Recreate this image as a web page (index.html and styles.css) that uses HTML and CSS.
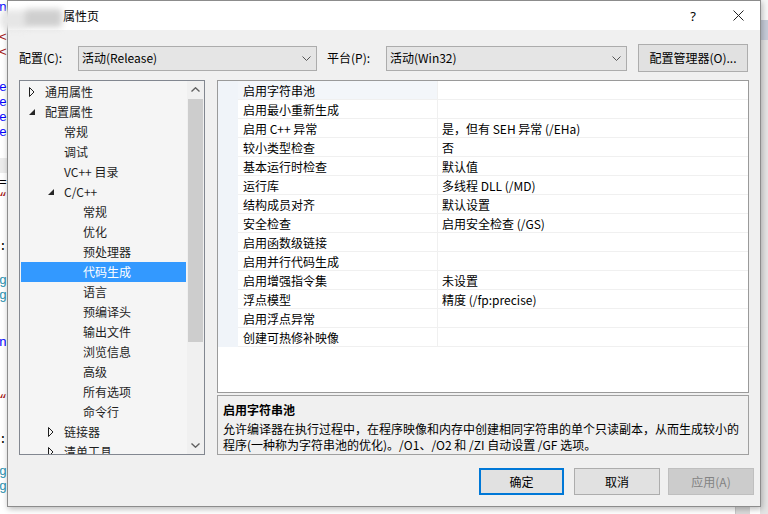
FILE: index.html
```html
<!DOCTYPE html>
<html lang="zh-CN">
<head>
<meta charset="utf-8">
<title>属性页</title>
<link rel="stylesheet" href="styles.css">
</head>
<body>
<div class="desktop">
  <!-- code editor behind the dialog -->
  <div class="editor">
    <div class="ln kw">n</div>
    <div class="ln"></div>
    <div class="ln tag">&lt;</div>
    <div class="ln tag">&lt;</div>
    <div class="gap g20"></div>
    <div class="ln kw">e</div>
    <div class="ln kw">e</div>
    <div class="ln kw">e</div>
    <div class="ln kw">e</div>
    <div class="gap g18"></div>
    <div class="band"></div>
    <div class="gap g2"></div>
    <div class="ln">=</div>
    <div class="ln str">&#8220;</div>
    <div class="gap g34"></div>
    <div class="ln">:</div>
    <div class="gap g19"></div>
    <div class="ln type">g</div>
    <div class="ln type">g</div>
    <div class="gap g32"></div>
    <div class="ln kw">n</div>
    <div class="gap g42"></div>
    <div class="ln str">&#8220;</div>
    <div class="gap g25"></div>
    <div class="ln">:</div>
    <div class="gap g17"></div>
    <div class="ln type">g</div>
    <div class="ln type">g</div>
    <div class="statusrow"><span class="scrollbox"></span></div>
  </div>
  <div class="rail">
    <div class="rail-top"></div>
    <div class="rail-tab"></div>
  </div>

  <div class="smudge"><span class="smudge-a"></span><span class="smudge-b"></span></div>

  <section class="dialog">
    <header class="titlebar">
      <span class="title">属性页</span>
      <span class="help">?</span>
      <svg class="close" viewBox="0 0 11 11" width="11" height="11"><path d="M0.5 0.5 L10.5 10.5 M10.5 0.5 L0.5 10.5" stroke="#222" stroke-width="1" fill="none"/></svg>
    </header>

    <div class="config-row">
      <span class="lbl">配置(C):</span>
      <div class="combo combo-cfg">
        <span class="combo-text">活动(Release)</span>
        <svg class="chev" viewBox="0 0 9 5" width="9" height="5"><path d="M0.5 0.5 L4.5 4.5 L8.5 0.5" stroke="#555" stroke-width="1" fill="none"/></svg>
      </div>
      <span class="lbl lbl-plat">平台(P):</span>
      <div class="combo combo-plat">
        <span class="combo-text">活动(Win32)</span>
        <svg class="chev" viewBox="0 0 9 5" width="9" height="5"><path d="M0.5 0.5 L4.5 4.5 L8.5 0.5" stroke="#555" stroke-width="1" fill="none"/></svg>
      </div>
      <button class="btn btn-mgr">配置管理器(O)...</button>
    </div>

    <div class="main">
      <div class="tree">
        <ul class="nodes">
          <li class="node lv0"><span class="tog"><svg viewBox="0 0 6 10" width="6" height="10"><path d="M0.5 0.5 L5 5 L0.5 9.5 Z" stroke="#1e1e1e" stroke-width="1" fill="none"/></svg></span>通用属性</li>
          <li class="node lv0"><span class="tog"><svg viewBox="0 0 6 6" width="6" height="6"><path d="M6 0 L6 6 L0 6 Z" fill="#262626"/></svg></span>配置属性</li>
          <li class="node lv1"><span class="tog"></span>常规</li>
          <li class="node lv1"><span class="tog"></span>调试</li>
          <li class="node lv1"><span class="tog"></span>VC++ 目录</li>
          <li class="node lv1"><span class="tog"><svg viewBox="0 0 6 6" width="6" height="6"><path d="M6 0 L6 6 L0 6 Z" fill="#262626"/></svg></span>C/C++</li>
          <li class="node lv2"><span class="tog"></span>常规</li>
          <li class="node lv2"><span class="tog"></span>优化</li>
          <li class="node lv2"><span class="tog"></span>预处理器</li>
          <li class="node lv2 selected"><span class="tog"></span>代码生成</li>
          <li class="node lv2"><span class="tog"></span>语言</li>
          <li class="node lv2"><span class="tog"></span>预编译头</li>
          <li class="node lv2"><span class="tog"></span>输出文件</li>
          <li class="node lv2"><span class="tog"></span>浏览信息</li>
          <li class="node lv2"><span class="tog"></span>高级</li>
          <li class="node lv2"><span class="tog"></span>所有选项</li>
          <li class="node lv2"><span class="tog"></span>命令行</li>
          <li class="node lv1"><span class="tog"><svg viewBox="0 0 6 10" width="6" height="10"><path d="M0.5 0.5 L5 5 L0.5 9.5 Z" stroke="#1e1e1e" stroke-width="1" fill="none"/></svg></span>链接器</li>
          <li class="node lv1"><span class="tog"><svg viewBox="0 0 6 10" width="6" height="10"><path d="M0.5 0.5 L5 5 L0.5 9.5 Z" stroke="#1e1e1e" stroke-width="1" fill="none"/></svg></span>清单工具</li>
        </ul>
        <div class="vscroll">
          <div class="vs-btn"><svg viewBox="0 0 9 5" width="9" height="5"><path d="M0.5 4.5 L4.5 0.8 L8.5 4.5" stroke="#606060" stroke-width="1.4" fill="none"/></svg></div>
          <div class="vs-thumb"></div>
          <div class="vs-track"></div>
          <div class="vs-btn"><svg viewBox="0 0 9 5" width="9" height="5"><path d="M0.5 0.5 L4.5 4.2 L8.5 0.5" stroke="#606060" stroke-width="1.4" fill="none"/></svg></div>
        </div>
      </div>

      <div class="right">
        <div class="props">
          <div class="prow current"><span class="strip"></span><span class="pname">启用字符串池</span><span class="pval"></span></div>
          <div class="prow"><span class="strip"></span><span class="pname">启用最小重新生成</span><span class="pval"></span></div>
          <div class="prow"><span class="strip"></span><span class="pname">启用 C++ 异常</span><span class="pval">是，但有 SEH 异常 (/EHa)</span></div>
          <div class="prow"><span class="strip"></span><span class="pname">较小类型检查</span><span class="pval">否</span></div>
          <div class="prow"><span class="strip"></span><span class="pname">基本运行时检查</span><span class="pval">默认值</span></div>
          <div class="prow"><span class="strip"></span><span class="pname">运行库</span><span class="pval">多线程 DLL (/MD)</span></div>
          <div class="prow"><span class="strip"></span><span class="pname">结构成员对齐</span><span class="pval">默认设置</span></div>
          <div class="prow"><span class="strip"></span><span class="pname">安全检查</span><span class="pval">启用安全检查 (/GS)</span></div>
          <div class="prow"><span class="strip"></span><span class="pname">启用函数级链接</span><span class="pval"></span></div>
          <div class="prow"><span class="strip"></span><span class="pname">启用并行代码生成</span><span class="pval"></span></div>
          <div class="prow"><span class="strip"></span><span class="pname">启用增强指令集</span><span class="pval">未设置</span></div>
          <div class="prow"><span class="strip"></span><span class="pname">浮点模型</span><span class="pval">精度 (/fp:precise)</span></div>
          <div class="prow"><span class="strip"></span><span class="pname">启用浮点异常</span><span class="pval"></span></div>
          <div class="prow"><span class="strip"></span><span class="pname">创建可热修补映像</span><span class="pval"></span></div>
        </div>
        <div class="desc">
          <div class="desc-title">启用字符串池</div>
          <div class="desc-text">允许编译器在执行过程中，在程序映像和内存中创建相同字符串的单个只读副本，从而生成较小的<br>程序(一种称为字符串池的优化)。/O1、/O2 和 /ZI 自动设置 /GF 选项。</div>
        </div>
      </div>
    </div>

    <div class="actions">
      <button class="btn btn-ok">确定</button>
      <button class="btn btn-cancel">取消</button>
      <button class="btn btn-apply" disabled>应用(A)</button>
    </div>
  </section>
</div>
</body>
</html>
```

FILE: styles.css
```css
* {
  box-sizing: border-box;
}

html,
body {
  margin: 0;
  padding: 0;
}

body {
  width: 768px;
  height: 514px;
  overflow: hidden;
  background: #fff;
  font-family: "Noto Sans CJK SC", "Noto Sans", sans-serif;
  font-size: 12px;
  color: #000;
}

/* ---------- desktop behind the dialog ---------- */
.desktop {
  position: relative;
  width: 768px;
  height: 514px;
  display: flex;
}

.editor {
  flex: 1;
  display: flex;
  flex-direction: column;
  font-family: "Liberation Mono", monospace;
  font-size: 13px;
  background: #fff;
}

.ln {
  height: 15px;
  line-height: 15px;
  margin-left: -1px;
  color: #000;
}

.kw { color: #0000ff; }
.tag { color: #a31515; }
.str { color: #a31515; }
.type { color: #2b91af; }

.gap { flex: none; }
.g2 { height: 2px; }
.g17 { height: 17px; }
.g18 { height: 18px; }
.g19 { height: 19px; }
.g20 { height: 20px; }
.g25 { height: 25px; }
.g32 { height: 32px; }
.g34 { height: 34px; }
.g42 { height: 42px; }

.band {
  height: 15px;
  background: #ececec;
}

.statusrow {
  margin-top: auto;
  height: 7px;
  display: flex;
  justify-content: flex-end;
  padding-right: 10px;
}

.scrollbox {
  width: 15px;
  height: 7px;
  background: #dadada;
  border-left: 1px solid #c8c8c8;
}

.rail {
  width: 8px;
  background: #e4e4e4;
  display: flex;
  flex-direction: column;
}

.rail-top {
  height: 20px;
  background: #f7f7f7;
}

.rail-tab {
  height: 20px;
  background: #c6cbd8;
}

/* blurred app icon in the caption */
.smudge {
  position: absolute;
  left: 0;
  top: 4px;
  width: 66px;
  height: 30px;
  z-index: 2;
  filter: blur(3px);
}

.smudge-a {
  position: absolute;
  left: 0;
  top: 6px;
  width: 30px;
  height: 20px;
  background: #e6e6e6;
  border-radius: 8px;
}

.smudge-b {
  position: absolute;
  left: 25px;
  top: 5px;
  width: 37px;
  height: 18px;
  background: #cfcfcf;
  border-radius: 3px;
}

/* ---------- dialog window ---------- */
.dialog {
  position: absolute;
  left: 7px;
  top: 0;
  width: 754px;
  height: 507px;
  border: 1px solid #8c8c8c;
  background: #f0f0f0;
  box-shadow: 1px 2px 6px rgba(0, 0, 0, 0.28);
  display: flex;
  flex-direction: column;
}

.titlebar {
  flex: none;
  height: 29px;
  background: #fff;
  display: flex;
  align-items: center;
  padding: 0 16px 0 55px;
}

.title {
  font-size: 12px;
  line-height: 16px;
}

.help {
  margin-left: auto;
  margin-right: 37px;
  font-family: "Noto Sans", sans-serif;
  font-size: 13px;
  line-height: 16px;
}

.close {
  display: block;
}

/* configuration selector row */
.config-row {
  flex: none;
  margin-top: 14px;
  height: 28px;
  padding-left: 11px;
  display: flex;
  align-items: center;
}

.lbl {
  width: 59px;
  flex: none;
  line-height: 16px;
}

.lbl-plat {
  margin-left: 10px;
}

.combo {
  flex: none;
  height: 25px;
  background: #e5e5e5;
  border: 1px solid #acacac;
  display: flex;
  align-items: center;
  padding: 0 4px 0 3px;
}

.combo-cfg { width: 239px; }
.combo-plat { width: 241px; }

.combo-text {
  line-height: 16px;
}

.chev {
  margin-left: auto;
  margin-right: 1px;
  display: block;
}

.btn {
  font-family: "Noto Sans CJK SC", "Noto Sans", sans-serif;
  font-size: 12px;
  color: #000;
  background: #e1e1e1;
  border: 1px solid #adadad;
  padding: 0;
  margin: 0;
  line-height: 16px;
}

.btn-mgr {
  margin-left: 11px;
  width: 110px;
  height: 28px;
}

/* tree + property panes */
.main {
  flex: none;
  margin-top: 8px;
  height: 375px;
  padding-left: 11px;
  display: flex;
  gap: 12px;
}

.tree {
  width: 186px;
  height: 375px;
  border: 1px solid #828790;
  background: #f5f5f5;
  display: flex;
}

.nodes {
  list-style: none;
  margin: 0;
  padding: 1px 1px 0 1px;
  width: 167px;
  overflow: hidden;
  color: #1e1e1e;
}

.node {
  height: 20px;
  line-height: 20px;
  display: flex;
  align-items: center;
  white-space: nowrap;
}

.lv0 { padding-left: 8px; }
.lv1 { padding-left: 27px; }
.lv2 { padding-left: 46px; }

.tog {
  width: 16px;
  flex: none;
  display: flex;
  align-items: center;
}

.tog svg {
  display: block;
}

.node.selected {
  background: #3399ff;
  color: #fff;
}

.vscroll {
  width: 17px;
  display: flex;
  flex-direction: column;
  background: #f0f0f0;
}

.vs-btn {
  height: 17px;
  display: flex;
  align-items: center;
  justify-content: center;
}

.vs-btn svg {
  display: block;
}

.vs-thumb {
  height: 243px;
  margin: 1px 1px 0 1px;
  background: #cdcdcd;
}

.vs-track {
  flex: 1;
}

.right {
  width: 532px;
  display: flex;
  flex-direction: column;
  gap: 2px;
}

.props {
  height: 313px;
  background: #fff;
  border: 1px solid #9a9a9a;
  overflow: hidden;
}

.prow {
  height: 19px;
  display: grid;
  grid-template-columns: 20px 200px 1fr;
}

.strip {
  background: #f0f4f9;
}

.pname,
.pval {
  line-height: 19px;
  border-bottom: 1px solid #f0f0f0;
  white-space: nowrap;
  overflow: hidden;
}

.pname {
  padding-left: 5px;
  border-right: 1px solid #f0f0f0;
}

.pval {
  padding-left: 4px;
}

.prow.current .pname {
  background: #f3f6fa;
}

.desc {
  height: 60px;
  border: 1px solid #a0a0a0;
  background: #f0f0f0;
  padding: 4px 5px 0 5px;
}

.desc-title {
  font-weight: bold;
  line-height: 19px;
  margin-bottom: 2px;
}

.desc-text {
  line-height: 16px;
  white-space: nowrap;
}

/* dialog buttons */
.actions {
  flex: none;
  margin-top: 13px;
  padding-right: 6px;
  display: flex;
  justify-content: flex-end;
}

.actions .btn {
  height: 27px;
}

.btn-ok {
  width: 85px;
  border: 2px solid #0078d7;
}

.btn-cancel {
  width: 86px;
  margin-left: 10px;
}

.btn-apply {
  width: 86px;
  margin-left: 8px;
  background: #cccccc;
  border-color: #bfbfbf;
  color: #838383;
}
```
